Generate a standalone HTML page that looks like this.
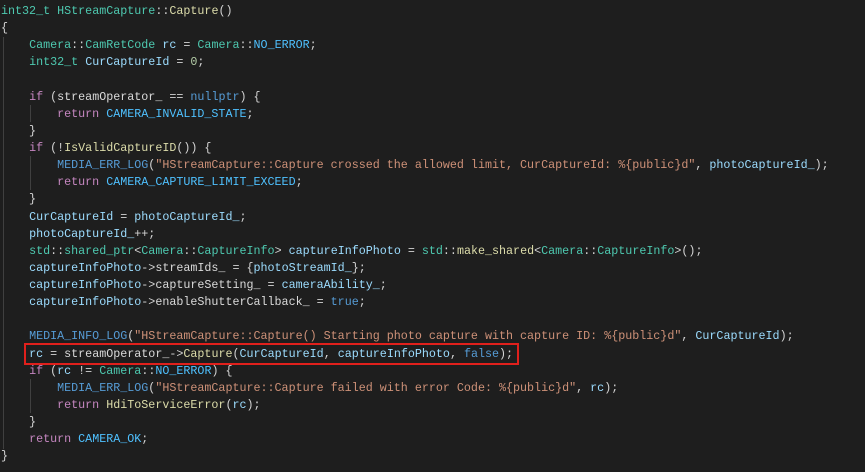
<!DOCTYPE html>
<html><head><meta charset="utf-8"><style>
html,body{margin:0;padding:0;background:#1e1e1e;width:865px;height:472px;overflow:hidden}
pre{position:absolute;left:1px;top:3px;margin:0;font-family:"Liberation Mono",monospace;font-size:11.7px;line-height:17.12px;color:#d4d4d4;white-space:pre}
.t{color:#4ec9b0}.f{color:#dcdcaa}.k{color:#c586c0}.b{color:#569cd6}.c{color:#4fc1ff}.s{color:#ce9178}.v{color:#9cdcfe}.m{color:#dadada}.n{color:#b5cea8}
.box{position:absolute;left:24px;top:343px;width:491px;height:18px;border:2px solid #e0201c}
.g{position:absolute;left:3px;width:1px;background:#404040}
</style></head><body>
<div class="g" style="top:37px;height:412px"></div>
<div class="g" style="left:30px;top:105px;height:17px"></div>
<div class="g" style="left:30px;top:156px;height:34px"></div>
<div class="g" style="left:30px;top:379px;height:34px"></div>
<pre><span class="t">int32_t</span> <span class="t">HStreamCapture</span>::<span class="f">Capture</span>()
{
    <span class="t">Camera</span>::<span class="t">CamRetCode</span> <span class="v">rc</span> = <span class="t">Camera</span>::<span class="c">NO_ERROR</span>;
    <span class="t">int32_t</span> <span class="v">CurCaptureId</span> = <span class="n">0</span>;

    <span class="k">if</span> (<span class="m">streamOperator_</span> == <span class="b">nullptr</span>) {
        <span class="k">return</span> <span class="c">CAMERA_INVALID_STATE</span>;
    }
    <span class="k">if</span> (!<span class="f">IsValidCaptureID</span>()) {
        <span class="b">MEDIA_ERR_LOG</span>(<span class="s">"HStreamCapture::Capture crossed the allowed limit, CurCaptureId: %{public}d"</span>, <span class="v">photoCaptureId_</span>);
        <span class="k">return</span> <span class="c">CAMERA_CAPTURE_LIMIT_EXCEED</span>;
    }
    <span class="v">CurCaptureId</span> = <span class="v">photoCaptureId_</span>;
    <span class="v">photoCaptureId_</span>++;
    <span class="t">std</span>::<span class="t">shared_ptr</span>&lt;<span class="t">Camera</span>::<span class="t">CaptureInfo</span>&gt; <span class="v">captureInfoPhoto</span> = <span class="t">std</span>::<span class="f">make_shared</span>&lt;<span class="t">Camera</span>::<span class="t">CaptureInfo</span>&gt;();
    <span class="v">captureInfoPhoto</span>-&gt;<span class="m">streamIds_</span> = {<span class="v">photoStreamId_</span>};
    <span class="v">captureInfoPhoto</span>-&gt;<span class="m">captureSetting_</span> = <span class="v">cameraAbility_</span>;
    <span class="v">captureInfoPhoto</span>-&gt;<span class="m">enableShutterCallback_</span> = <span class="b">true</span>;

    <span class="b">MEDIA_INFO_LOG</span>(<span class="s">"HStreamCapture::Capture() Starting photo capture with capture ID: %{public}d"</span>, <span class="v">CurCaptureId</span>);
    <span class="v">rc</span> = <span class="m">streamOperator_</span>-&gt;<span class="f">Capture</span>(<span class="v">CurCaptureId</span>, <span class="v">captureInfoPhoto</span>, <span class="b">false</span>);
    <span class="k">if</span> (<span class="v">rc</span> != <span class="t">Camera</span>::<span class="c">NO_ERROR</span>) {
        <span class="b">MEDIA_ERR_LOG</span>(<span class="s">"HStreamCapture::Capture failed with error Code: %{public}d"</span>, <span class="v">rc</span>);
        <span class="k">return</span> <span class="f">HdiToServiceError</span>(<span class="v">rc</span>);
    }
    <span class="k">return</span> <span class="c">CAMERA_OK</span>;
}</pre>
<div class="box"></div>
</body></html>
